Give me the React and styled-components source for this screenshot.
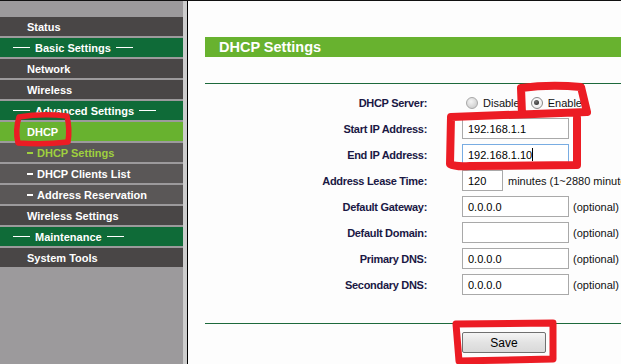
import React from 'react';
import styled, { createGlobalStyle } from 'styled-components';

const Global = createGlobalStyle`
  html, body { margin: 0; padding: 0; width: 621px; height: 364px; overflow: hidden; background: #fdfdfd; }
  #root { height: 364px; }
  * { box-sizing: border-box; }
`;

const Page = styled.div`
  position: relative;
  display: flex;
  width: 621px;
  height: 364px;
  border-top: 1px solid #111;
  font-family: "Liberation Sans", Arial, sans-serif;
  overflow: hidden;
`;

const Sidebar = styled.nav`
  width: 183px;
  flex: none;
  background: #9c9a9c;
  padding-top: 16px;
  display: flex;
  flex-direction: column;
  gap: 2px;
`;

const tones = {
  item: '#494646',
  section: '#0f6b38',
  active: '#68b22f',
  sub: '#5a5757',
};

const MenuRow = styled.div`
  height: 19px;
  display: flex;
  align-items: center;
  padding-left: ${(p) => (p.$kind === 'section' ? 13 : 27)}px;
  background: ${(p) => tones[p.$kind]};
  color: ${(p) => (p.$current ? '#9fd03e' : '#fff')};
  font-size: 11px;
  font-weight: bold;
  white-space: nowrap;
`;

const Rule = styled.span`
  width: 17px;
  height: 1px;
  background: #fff;
  margin: ${(p) => (p.$after ? '0 0 0 5px' : '0 5px 0 0')};
`;

const SubDash = styled.span`
  width: 6px;
  height: 2px;
  background: currentColor;
  margin-right: 4px;
`;

const Divider = styled.div`
  width: 5px;
  flex: none;
  background: #cdcdcd;
  border-right: 1px solid #000;
`;

const Main = styled.main`
  flex: 1;
  min-width: 0;
  padding: 36px 0 0 17px;
  background: #fdfdfd;
`;

const TitleBar = styled.h1`
  margin: 0;
  height: 20px;
  background: #68b22f;
  color: #fff;
  font-size: 14.5px;
  font-weight: bold;
  padding-left: 14px;
  display: flex;
  align-items: center;
`;

const Line = styled.div`
  margin-top: ${(p) => p.$top}px;
  height: 1px;
  background: #1d6a3c;
`;

const Form = styled.div`
  display: grid;
  grid-template-columns: 222px auto;
  grid-auto-rows: 21px;
  column-gap: 35px;
  row-gap: 5px;
  padding-top: 8px;
`;

const Label = styled.div`
  text-align: right;
  align-self: center;
  font-size: 11px;
  font-weight: bold;
  letter-spacing: -0.3px;
  color: #1a1844;
  white-space: nowrap;
`;

const Control = styled.div`
  display: flex;
  align-items: center;
  white-space: nowrap;
  font-size: 11px;
  color: #111;
`;

const RadioGroup = styled.div`
  display: flex;
  align-items: center;
  padding-left: 4px;
`;

const Radio = styled.span`
  width: 12px;
  height: 12px;
  border-radius: 50%;
  border: 1px solid ${(p) => (p.$on ? '#8a8a8a' : '#a8a8a8')};
  background: ${(p) =>
    p.$on
      ? 'radial-gradient(circle at 45% 40%, #ffffff 0%, #f0f0f0 70%, #d8d8d8 100%)'
      : 'radial-gradient(circle at 40% 35%, #f4f4f4 0%, #d2d2d2 70%, #bcbcbc 100%)'};
  display: inline-flex;
  align-items: center;
  justify-content: center;
  &::after {
    content: '';
    display: ${(p) => (p.$on ? 'block' : 'none')};
    width: 5px;
    height: 5px;
    border-radius: 50%;
    background: radial-gradient(circle at 40% 35%, #777, #222);
  }
`;

const RadioText = styled.span`
  margin-left: 5px;
  margin-right: ${(p) => (p.$last ? 0 : 11)}px;
  font-size: 11px;
  color: #111;
`;

const Field = styled.div`
  width: ${(p) => p.$w || 107}px;
  height: 21px;
  border: 1px solid ${(p) => (p.$focus ? '#78ace2' : '#a9a9a9')};
  background: #fff;
  padding-left: 5px;
  display: flex;
  align-items: center;
  font-size: 11px;
  color: #000;
`;

const Caret = styled.span`
  width: 1px;
  height: 13px;
  background: #000;
`;

const Hint = styled.span`
  margin-left: ${(p) => p.$gap || 4}px;
  font-size: 11px;
  color: #111;
`;

const Footer = styled.div`
  padding: 8px 0 0 257px;
`;

const SaveButton = styled.button`
  width: 84px;
  height: 21px;
  border: 1px solid #707070;
  border-radius: 2px;
  background: linear-gradient(#f5f5f5, #e3e3e3 50%, #d9d9d9);
  font-family: "Liberation Sans", Arial, sans-serif;
  font-size: 12px;
  color: #000;
  padding: 0;
`;

const Marks = styled.svg`
  position: absolute;
  left: 0;
  top: 0;
  width: 621px;
  height: 364px;
  pointer-events: none;
  fill: none;
  stroke: #ec1c24;
  stroke-linecap: round;
  stroke-linejoin: round;
`;

const menu = [
  { kind: 'item', text: 'Status' },
  { kind: 'section', text: 'Basic Settings' },
  { kind: 'item', text: 'Network' },
  { kind: 'item', text: 'Wireless' },
  { kind: 'section', text: 'Advanced Settings' },
  { kind: 'active', text: 'DHCP' },
  { kind: 'sub', text: 'DHCP Settings', current: true },
  { kind: 'sub', text: 'DHCP Clients List' },
  { kind: 'sub', text: 'Address Reservation' },
  { kind: 'item', text: 'Wireless Settings' },
  { kind: 'section', text: 'Maintenance' },
  { kind: 'item', text: 'System Tools' },
];

const optionalRows = [
  { label: 'Default Gateway:', value: '0.0.0.0' },
  { label: 'Default Domain:', value: '' },
  { label: 'Primary DNS:', value: '0.0.0.0' },
  { label: 'Secondary DNS:', value: '0.0.0.0' },
];

export default function App() {
  return (
    <>
      <Global />
      <Page>
        <Sidebar>
          {menu.map((m) => (
            <MenuRow key={m.text} $kind={m.kind} $current={m.current}>
              {m.kind === 'section' && <Rule />}
              {m.kind === 'sub' && <SubDash />}
              {m.text}
              {m.kind === 'section' && <Rule $after />}
            </MenuRow>
          ))}
        </Sidebar>
        <Divider />
        <Main>
          <TitleBar>DHCP Settings</TitleBar>
          <Line $top={26} />
          <Form>
            <Label>DHCP Server:</Label>
            <Control>
              <RadioGroup>
                <Radio />
                <RadioText>Disable</RadioText>
                <Radio $on />
                <RadioText $last>Enable</RadioText>
              </RadioGroup>
            </Control>

            <Label>Start IP Address:</Label>
            <Control>
              <Field>192.168.1.1</Field>
            </Control>

            <Label>End IP Address:</Label>
            <Control>
              <Field $focus>
                192.168.1.10
                <Caret />
              </Field>
            </Control>

            <Label>Address Lease Time:</Label>
            <Control>
              <Field $w={41}>120</Field>
              <Hint $gap={5}>minutes (1~2880 minutes)</Hint>
            </Control>

            {optionalRows.map((r) => (
              <React.Fragment key={r.label}>
                <Label>{r.label}</Label>
                <Control>
                  <Field>{r.value}</Field>
                  <Hint>(optional)</Hint>
                </Control>
              </React.Fragment>
            ))}
          </Form>
          <Line $top={28} />
          <Footer>
            <SaveButton>Save</SaveButton>
          </Footer>
        </Main>
        <Marks viewBox="0 0 621 364">
          <path
            strokeWidth="5.5"
            d="M19 116 Q42 112 67 115 Q70 128 68 141 Q44 144 18 142 Q15 129 19 116 Z"
          />
          <path
            strokeWidth="8"
            d="M522 113 L521 87 Q550 83 581 86 L587 111 L451 116 L450 163 Q455 166 470 165 L577 164 L577 117"
          />
          <path strokeWidth="7" d="M456 323 L553 322 L553 358 L459 360 L456 323 Z" />
        </Marks>
      </Page>
    </>
  );
}
